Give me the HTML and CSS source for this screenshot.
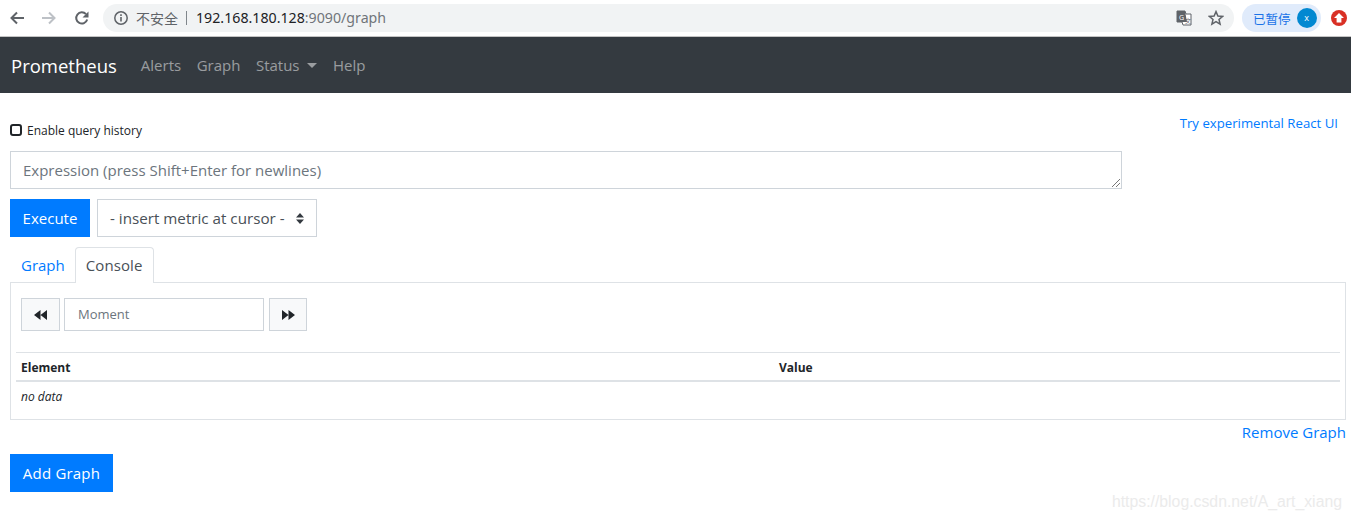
FILE: index.html
```html
<!DOCTYPE html>
<html lang="en">
<head>
    <meta charset="UTF-8">
    <title>Prometheus Time Series Collection and Processing Server</title>
    <link rel="stylesheet" href="styles.css">
</head>
<body>
    <div class="chrome">
        <svg class="chrome-icon" width="16" height="16" viewBox="0 0 16 16"><path d="M15 8H3M8 2.5 2.5 8 8 13.5" fill="none" stroke="#5f6368" stroke-width="2"/></svg>
        <svg class="chrome-icon" width="16" height="16" viewBox="0 0 16 16"><path d="M1 8h12M8 2.5 13.5 8 8 13.5" fill="none" stroke="#bdc1c6" stroke-width="2"/></svg>
        <svg class="chrome-icon reload" width="16" height="16" viewBox="0 0 16 16"><path d="M13.2 9.5A5.6 5.6 0 1 1 12 4.2" fill="none" stroke="#5f6368" stroke-width="2"/><path d="M14.5 1.5v6h-6z" fill="#5f6368"/></svg>
        <div class="omnibox">
            <svg width="16" height="16" viewBox="0 0 16 16"><circle cx="8" cy="8" r="6.2" fill="none" stroke="#5f6368" stroke-width="1.5"/><path d="M8 7v4.5M8 4.2v1.7" stroke="#5f6368" stroke-width="1.6"/></svg>
            <span class="insecure">不安全</span>
            <span class="omni-sep"></span>
            <span class="url">192.168.180.128<span class="url-rest">:9090/graph</span></span>
            <span class="omni-right">
                <svg width="16" height="16" viewBox="0 0 16 16"><path d="M1 1h8l1 3h5v11H7l-1-3H1z" fill="#fff" stroke="#5f6368"/><path d="M1 1h8l2 11H1z" fill="#5f6368"/><text x="3" y="9.5" class="translate-g">G</text><text x="9" y="12.5" class="translate-x">文</text></svg>
                <svg width="16" height="16" viewBox="0 0 16 16"><path d="M8 1.6 9.9 6l4.7.4-3.6 3.1 1.1 4.7L8 11.7l-4.1 2.5L5 9.5 1.4 6.4 6.1 6z" fill="none" stroke="#5f6368" stroke-width="1.5"/></svg>
            </span>
        </div>
        <div class="profile">
            <span>已暂停</span>
            <span class="avatar">x</span>
        </div>
        <svg class="ext" width="16" height="16" viewBox="0 0 16 16"><circle cx="8" cy="8" r="8" fill="#d93025"/><path d="M8 3 13 8H10.4v4.5H5.6V8H3z" fill="#fff"/></svg>
    </div>

    <nav class="navbar">
        <a class="brand" href="#">Prometheus</a>
        <a class="nav-link" href="#">Alerts</a>
        <a class="nav-link" href="#">Graph</a>
        <a class="nav-link" href="#">Status <span class="caret"></span></a>
        <a class="nav-link" href="#">Help</a>
    </nav>

    <main class="container">
        <div class="top-row">
            <label class="history"><span class="checkbox"></span>Enable query history</label>
            <a class="react-link" href="#">Try experimental React UI</a>
        </div>

        <div class="expression">Expression (press Shift+Enter for newlines)
            <svg class="grip" width="10" height="10" viewBox="0 0 10 10"><path d="M9 1 1 9M9 5 5 9" stroke="#777" stroke-width="1"/></svg>
        </div>

        <div class="actions">
            <button class="btn-primary btn-execute">Execute</button>
            <div class="metric-select">- insert metric at cursor -
                <svg width="8" height="11" viewBox="0 0 8 11"><path d="M4 0 8 4.5H0zM4 11 0 6.5H8z" fill="#343a40"/></svg>
            </div>
        </div>

        <div class="tabs">
            <a class="tab" href="#">Graph</a>
            <a class="tab tab-active" href="#">Console</a>
        </div>

        <div class="panel">
            <div class="moment-row">
                <button class="btn-step"><svg width="13" height="10" viewBox="0 0 13 10"><path d="M6.5 0v10L0 5zM13 0v10L6.5 5z" fill="#212529"/></svg></button>
                <div class="moment">Moment</div>
                <button class="btn-step btn-step-next"><svg width="13" height="10" viewBox="0 0 13 10"><path d="M0 0v10l6.5-5zM6.5 0v10L13 5z" fill="#212529"/></svg></button>
            </div>
            <table class="results">
                <thead>
                    <tr><th class="col-element">Element</th><th>Value</th></tr>
                </thead>
                <tbody>
                    <tr><td colspan="2"><em>no data</em></td></tr>
                </tbody>
            </table>
        </div>

        <div class="remove-row"><a href="#">Remove Graph</a></div>
        <button class="btn-primary btn-add">Add Graph</button>
    </main>

    <div class="watermark">https://blog.csdn.net/A_art_xiang</div>
</body>
</html>
```

FILE: styles.css
```css
body {
    margin: 0;
    height: 520px;
    overflow: hidden;
    position: relative;
    background: #fff;
    font-family: "Open Sans", "Noto Sans CJK SC", sans-serif;
    color: #212529;
}
a {
    text-decoration: none;
    color: #007bff;
}

/* browser toolbar */
.chrome {
    height: 36px;
    border-bottom: 1px solid #c4c4c4;
    display: flex;
    align-items: center;
}
.chrome-icon {
    margin-left: 9px;
    margin-right: 7px;
}
.chrome-icon.reload {
    margin-left: 10px;
}
.omnibox {
    width: 1131px;
    height: 28px;
    margin-left: 6px;
    padding-left: 10px;
    box-sizing: border-box;
    background: #f1f3f4;
    border-radius: 14px;
    display: flex;
    align-items: center;
    font-size: 14px;
}
.insecure {
    margin-left: 7px;
    font-size: 14px;
    color: #5f6368;
}
.omni-sep {
    width: 1px;
    height: 14px;
    margin: 0 9px 0 8px;
    background: #80868b;
}
.url {
    margin-top: -2px;
    color: #202124;
    font-family: "Noto Sans", sans-serif;
    font-size: 14.2px;
}
.url-rest {
    color: #70757a;
}
.omni-right {
    margin-left: auto;
    display: flex;
    gap: 16px;
    padding-right: 10px;
}
.translate-g {
    font-size: 7px;
    fill: #fff;
}
.translate-x {
    font-size: 6px;
    fill: #5f6368;
}
.profile {
    width: 79px;
    height: 28px;
    margin-left: 8px;
    padding-left: 11px;
    box-sizing: border-box;
    background: #e0ebfb;
    border-radius: 14px;
    display: flex;
    align-items: center;
    color: #1a73e8;
    font-size: 12.5px;
}
.avatar {
    width: 20px;
    height: 20px;
    margin-left: 6px;
    border-radius: 50%;
    background: #0288d1;
    color: #fff;
    font-size: 9px;
    line-height: 19px;
    text-align: center;
}
.ext {
    margin-left: 10px;
}

/* navbar */
.navbar {
    height: 56px;
    padding-left: 11px;
    background: #343a40;
    display: flex;
    align-items: center;
}
.brand {
    color: #fff;
    font-size: 18.5px;
    margin-right: 16.25px;
}
.nav-link {
    color: rgba(255, 255, 255, .5);
    font-size: 15px;
    padding: 0 7.75px;
}
.caret {
    display: inline-block;
    margin-left: 4px;
    vertical-align: 3px;
    border-top: 5px solid;
    border-left: 5px solid transparent;
    border-right: 5px solid transparent;
}

/* page */
.container {
    padding: 0 5px 0 10px;
}
.top-row {
    height: 58px;
    display: flex;
    justify-content: space-between;
}
.history {
    margin-top: 28px;
    font-size: 12px;
    display: flex;
    align-items: center;
    height: 18px;
}
.checkbox {
    width: 8px;
    height: 8px;
    margin-right: 5px;
    border: 2px solid #212529;
    border-radius: 3px;
}
.react-link {
    margin-top: 21px;
    margin-right: 8px;
    font-size: 13.2px;
    height: 18px;
}
.expression {
    width: 1112px;
    height: 38px;
    box-sizing: border-box;
    padding-left: 12px;
    border: 1px solid #ced4da;
    font-size: 15px;
    line-height: 36px;
    color: #6c757d;
    position: relative;
}
.grip {
    position: absolute;
    right: 0;
    bottom: 0;
}
.actions {
    margin-top: 10px;
    display: flex;
    gap: 7px;
}
.btn-primary {
    height: 38px;
    padding: 0;
    border: none;
    background: #007bff;
    color: #fff;
    font-family: inherit;
    font-size: 15px;
    display: block;
}
.btn-execute {
    width: 80px;
}
.btn-add {
    width: 103px;
    letter-spacing: .2px;
}
.metric-select {
    width: 220px;
    height: 38px;
    box-sizing: border-box;
    padding: 0 12px;
    border: 1px solid #ced4da;
    color: #495057;
    font-size: 15.2px;
    display: flex;
    align-items: center;
    justify-content: space-between;
}
.tabs {
    margin-top: 10px;
    height: 35px;
    display: flex;
}
.tab {
    height: 36px;
    box-sizing: border-box;
    padding: 0 10px 0 11px;
    font-size: 15px;
    line-height: 36px;
}
.tab-active {
    padding: 0 10px;
    letter-spacing: .1px;
    color: #495057;
    background: #fff;
    border: 1px solid #dee2e6;
    border-bottom: none;
    border-radius: 4px 4px 0 0;
    position: relative;
    z-index: 1;
    line-height: 34px;
}
.panel {
    height: 138px;
    box-sizing: border-box;
    border: 1px solid #dee2e6;
    padding: 15px 5px 0;
}
.moment-row {
    height: 33px;
    padding-left: 5px;
    display: flex;
    gap: 4px;
}
.btn-step {
    width: 39px;
    height: 33px;
    padding: 0;
    border: 1px solid #ced4da;
    background: #f8f9fa;
    display: flex;
    align-items: center;
    justify-content: center;
}
.btn-step-next {
    width: 38px;
    margin-left: 1px;
}
.moment {
    width: 200px;
    height: 33px;
    box-sizing: border-box;
    padding-left: 13px;
    border: 1px solid #ced4da;
    color: #6c757d;
    font-size: 13px;
    line-height: 30px;
}
.results {
    width: 100%;
    margin-top: 21px;
    border-collapse: collapse;
    font-size: 12px;
}
.results th {
    text-align: left;
    padding: 2px 5px 0;
    height: 25px;
    border-top: 1px solid #dee2e6;
    border-bottom: 2px solid #dee2e6;
}
.results td {
    padding: 0 5px;
    height: 29px;
}
.col-element {
    width: 748px;
}
.remove-row {
    height: 34px;
    font-size: 15px;
    line-height: 24px;
    text-align: right;
}

.watermark {
    position: absolute;
    right: 9px;
    bottom: 9px;
    font-family: "Liberation Sans", sans-serif;
    font-size: 15.8px;
    color: #ebebeb;
}
```
